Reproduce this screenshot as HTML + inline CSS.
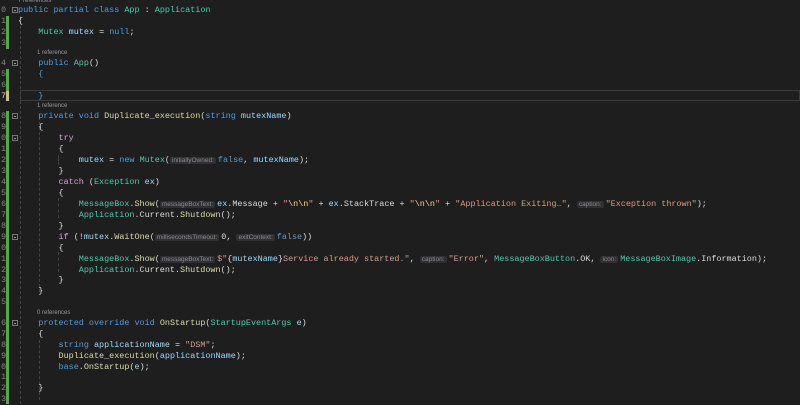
<!DOCTYPE html>
<html><head><meta charset="utf-8"><style>
body{margin:0;width:800px;height:404px;background:#1e1e1e;overflow:hidden;position:relative;font-family:"Liberation Mono",monospace;}
.l{position:absolute;left:18px;height:11px;line-height:11px;font-size:8.45px;color:#dcdcdc;white-space:pre;}
.n{position:absolute;left:-3px;width:9px;text-align:right;font-size:8.2px;line-height:11px;height:11px;color:#858585;font-family:"Liberation Mono",monospace;}
.r{position:absolute;left:37px;font-size:6px;color:#999;font-family:"Liberation Sans",sans-serif;line-height:8px}
.k{color:#569cd6}.t{color:#4ec9b0}.m{color:#dcdcaa}.s{color:#d69d85}.p{color:#9cdcfe}.c{color:#d8a0df}.e{color:#ffd68f}
.h{font-size:6.5px;background:#303033;color:#8a8a8a;padding:0 2px;margin-right:2px;border-radius:2px;font-family:"Liberation Sans",sans-serif;}
.g{position:absolute;left:6px;width:3px;background:#57a64a}
.v{position:absolute;width:0;border-left:1px dashed #444}
.box{position:absolute;left:12px;width:6px;height:6px;border:1px solid #777;box-sizing:border-box}
.box:after{content:"";position:absolute;left:1px;top:2px;width:2px;height:0;border-top:1px solid #999}
</style></head><body>
<div class="g" style="top:16px;height:33px"></div>
<div class="g" style="top:69px;height:22px"></div>
<div class="g" style="top:91px;height:10px;background:#d7ba7d"></div>
<div class="g" style="top:111px;height:293px"></div>
<div style="position:absolute;left:20px;top:90px;width:780px;height:11px;border:1px solid #3a3a3a;box-sizing:border-box"></div>
<div class="v" style="left:20px;top:16px;height:388px"></div>
<div class="v" style="left:39px;top:122px;height:170px"></div>
<div class="v" style="left:39px;top:340px;height:60px"></div>
<div class="v" style="left:58px;top:155px;height:10px"></div>
<div class="v" style="left:58px;top:198px;height:20px"></div>
<div class="v" style="left:58px;top:252px;height:20px"></div>
<div class="box" style="top:7px"></div><div class="box" style="top:60px"></div><div class="box" style="top:113px"></div><div class="box" style="top:135px"></div><div class="box" style="top:234px"></div><div class="box" style="top:320px"></div>
<div class="r" style="top:-3px;left:18px">7 references</div>
<div class="r" style="top:49px">1 reference</div>
<div class="r" style="top:102px">1 reference</div>
<div class="r" style="top:309px">0 references</div>

<div class="n" style="top:5px">0</div><div class="l" style="top:5px"><span class="k">public partial class</span> <span class="t">App</span> : <span class="t">Application</span></div>
<div class="n" style="top:16px">1</div><div class="l" style="top:16px">{</div>
<div class="n" style="top:27px">2</div><div class="l" style="top:27px">    <span class="t">Mutex</span> <span class="p">mutex</span> = <span class="k">null</span>;</div>
<div class="n" style="top:38px">3</div>
<div class="n" style="top:58px">4</div><div class="l" style="top:58px">    <span class="k">public</span> <span class="t">App</span>()</div>
<div class="n" style="top:69px">5</div><div class="l" style="top:69px">    <span class="k">{</span></div>
<div class="n" style="top:80px">6</div>
<div class="n" style="top:91px;color:#ddd">7</div><div class="l" style="top:91px">    <span class="k">}</span></div>
<div class="n" style="top:111px">8</div><div class="l" style="top:111px">    <span class="k">private void</span> <span class="m">Duplicate_execution</span>(<span class="k">string</span> <span class="p">mutexName</span>)</div>
<div class="n" style="top:122px">9</div><div class="l" style="top:122px">    {</div>
<div class="n" style="top:133px">0</div><div class="l" style="top:133px">        <span class="c">try</span></div>
<div class="n" style="top:144px">1</div><div class="l" style="top:144px">        {</div>
<div class="n" style="top:155px">2</div><div class="l" style="top:155px">            <span class="p">mutex</span> = <span class="k">new</span> <span class="t">Mutex</span>(<span class="h">initiallyOwned:</span><span class="k">false</span>, <span class="p">mutexName</span>);</div>
<div class="n" style="top:166px">3</div><div class="l" style="top:166px">        }</div>
<div class="n" style="top:177px">4</div><div class="l" style="top:177px">        <span class="c">catch</span> (<span class="t">Exception</span> <span class="p">ex</span>)</div>
<div class="n" style="top:188px">5</div><div class="l" style="top:188px">        {</div>
<div class="n" style="top:199px">6</div><div class="l" style="top:199px">            <span class="t">MessageBox</span>.<span class="m">Show</span>(<span class="h">messageBoxText:</span><span class="p">ex</span>.Message + <span class="s">"</span><span class="e">\n\n</span><span class="s">"</span> + <span class="p">ex</span>.StackTrace + <span class="s">"</span><span class="e">\n\n</span><span class="s">"</span> + <span class="s">"Application Exiting…"</span>, <span class="h">caption:</span><span class="s">"Exception thrown"</span>);</div>
<div class="n" style="top:210px">7</div><div class="l" style="top:210px">            <span class="t">Application</span>.Current.<span class="m">Shutdown</span>();</div>
<div class="n" style="top:221px">8</div><div class="l" style="top:221px">        }</div>
<div class="n" style="top:232px">9</div><div class="l" style="top:232px">        <span class="c">if</span> (!<span class="p">mutex</span>.<span class="m">WaitOne</span>(<span class="h">millisecondsTimeout:</span>0, <span class="h">exitContext:</span><span class="k">false</span>))</div>
<div class="n" style="top:243px">0</div><div class="l" style="top:243px">        {</div>
<div class="n" style="top:254px">1</div><div class="l" style="top:254px">            <span class="t">MessageBox</span>.<span class="m">Show</span>(<span class="h">messageBoxText:</span><span class="s">$"</span>{<span class="p">mutexName</span>}<span class="s">Service already started."</span>, <span class="h">caption:</span><span class="s">"Error"</span>, <span class="t">MessageBoxButton</span>.OK, <span class="h">icon:</span><span class="t">MessageBoxImage</span>.Information);</div>
<div class="n" style="top:265px">2</div><div class="l" style="top:265px">            <span class="t">Application</span>.Current.<span class="m">Shutdown</span>();</div>
<div class="n" style="top:275px">3</div><div class="l" style="top:275px">        }</div>
<div class="n" style="top:286px">4</div><div class="l" style="top:286px">    }</div>
<div class="n" style="top:297px">5</div>
<div class="n" style="top:318px">6</div><div class="l" style="top:318px">    <span class="k">protected override void</span> <span class="m">OnStartup</span>(<span class="t">StartupEventArgs</span> <span class="p">e</span>)</div>
<div class="n" style="top:329px">7</div><div class="l" style="top:329px">    {</div>
<div class="n" style="top:340px">8</div><div class="l" style="top:340px">        <span class="k">string</span> <span class="p">applicationName</span> = <span class="s">"DSM"</span>;</div>
<div class="n" style="top:351px">9</div><div class="l" style="top:351px">        <span class="m">Duplicate_execution</span>(<span class="p">applicationName</span>);</div>
<div class="n" style="top:362px">0</div><div class="l" style="top:362px">        <span class="k">base</span>.<span class="m">OnStartup</span>(<span class="p">e</span>);</div>
<div class="n" style="top:372px">1</div>
<div class="n" style="top:383px">2</div><div class="l" style="top:383px">    }</div>
<div class="n" style="top:394px">3</div>
</body></html>
